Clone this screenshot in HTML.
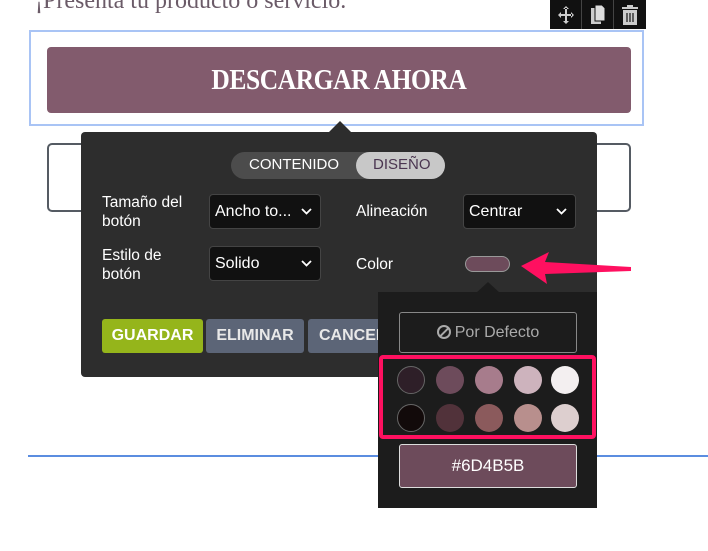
<!DOCTYPE html>
<html><head><meta charset="utf-8"><style>
*{box-sizing:border-box;margin:0;padding:0}
body{width:708px;height:551px;background:#fff;position:relative;overflow:hidden;font-family:"Liberation Sans",sans-serif}
.a{position:absolute}
.sel{background:#111;border:1px solid #444;border-radius:4px;color:#fff;font-size:16px;padding:0 0 0 5px;line-height:33px}
.sel svg{position:absolute;right:8px;top:13px}
.lbl{color:#fff;font-size:15.5px;line-height:19px}
.btn{color:#fff;font-weight:bold;font-size:16px;text-align:center;line-height:34px;border-radius:3px}
.c{position:absolute;width:28px;height:28px;border-radius:50%}
</style></head><body>
<div class="a" style="left:35px;top:-12px;font-family:'Liberation Serif',serif;font-size:24px;color:#6b5b68">¡Presenta tu producto o servicio.</div>
<div class="a" style="left:550px;top:0;width:96px;height:29px;background:#111;display:flex">
 <div style="width:32px;border-right:1px solid #444;display:flex;align-items:center;justify-content:center"><svg width="18" height="20" viewBox="0 0 18 20"><path d="M9 1L6 4h6zM9 19l-3-3h6zM1 10l3-3v6zM17 10l-3-3v6z M8 3h2v14H8z M3 9h12v2H3z" fill="#ccc"/></svg></div>
 <div style="width:32px;border-right:1px solid #444;display:flex;align-items:center;justify-content:center"><svg width="16" height="22" viewBox="0 0 16 22"><rect x="1" y="4" width="10" height="16" fill="#ccc"/><path d="M5 1h7l3 3v13H5z" fill="#ddd" stroke="#111" stroke-width="1"/></svg></div>
 <div style="width:32px;display:flex;align-items:center;justify-content:center"><svg width="18" height="22" viewBox="0 0 18 22"><rect x="1" y="3" width="16" height="2" fill="#ccc"/><rect x="6" y="1" width="6" height="2" fill="#ccc"/><path d="M2 6h14v15H2z" fill="#ccc"/><path d="M6 9v9M9 9v9M12 9v9" stroke="#111" stroke-width="1.2"/></svg></div>
</div>
<div class="a" style="left:29px;top:30px;width:615px;height:96px;border:2px solid #a9c4f5"></div>
<div class="a" style="left:47px;top:47px;width:584px;height:66px;background:#825b6d;border-radius:4px;color:#fff;font-family:'Liberation Serif',serif;font-weight:bold;font-size:29px;text-align:center;line-height:66px"><span style="display:inline-block;transform:scaleX(0.88);letter-spacing:-0.5px">DESCARGAR AHORA</span></div>
<div class="a" style="left:47px;top:143px;width:584px;height:69px;border:2px solid #555b63;border-radius:5px"></div>
<div class="a" style="left:28px;top:455px;width:680px;height:2px;background:#5b8de0"></div>
<div class="a" style="left:328px;top:121px;width:0;height:0;border-left:12px solid transparent;border-right:12px solid transparent;border-bottom:12px solid #2d2d2d"></div>
<div class="a" style="left:81px;top:132px;width:516px;height:245px;background:#2d2d2d;border-radius:4px"></div>
<div class="a" style="left:231px;top:152px;width:214px;height:27px;background:#4c4c4c;border-radius:14px"></div>
<div class="a" style="left:356px;top:152px;width:89px;height:27px;background:#c8c8c8;border-radius:14px"></div>
<div class="a" style="left:249px;top:156px;color:#fff;font-size:15px">CONTENIDO</div>
<div class="a" style="left:373px;top:156px;color:#4a3550;font-size:15px">DISEÑO</div>
<div class="a lbl" style="left:102px;top:193px">Tamaño del<br>botón</div>
<div class="a lbl" style="left:102px;top:246px">Estilo de<br>botón</div>
<div class="a lbl" style="left:356px;top:202px">Alineación</div>
<div class="a lbl" style="left:356px;top:255px">Color</div>
<div class="a sel" style="left:209px;top:194px;width:112px;height:35px">Ancho to...<svg width="11" height="7"><path d="M1 1l4.5 4.5L10 1" stroke="#fff" stroke-width="1.8" fill="none"/></svg></div>
<div class="a sel" style="left:209px;top:246px;width:112px;height:35px">Solido<svg width="11" height="7"><path d="M1 1l4.5 4.5L10 1" stroke="#fff" stroke-width="1.8" fill="none"/></svg></div>
<div class="a sel" style="left:463px;top:194px;width:113px;height:35px">Centrar<svg width="11" height="7"><path d="M1 1l4.5 4.5L10 1" stroke="#fff" stroke-width="1.8" fill="none"/></svg></div>
<div class="a" style="left:465px;top:256px;width:45px;height:16px;background:#6d4b5b;border:1px solid #999;border-radius:8px"></div>
<div class="a btn" style="left:102px;top:319px;width:101px;background:#95b51b">GUARDAR</div>
<div class="a btn" style="left:206px;top:319px;width:98px;background:#5c6577;color:#e8e8e8">ELIMINAR</div>
<div class="a btn" style="left:308px;top:319px;width:90px;background:#5c6577;color:#e8e8e8;text-align:left;padding-left:11px">CANCELAR</div>
<div class="a" style="left:476px;top:282px;width:0;height:0;border-left:12px solid transparent;border-right:12px solid transparent;border-bottom:11px solid #1c1c1c"></div>
<div class="a" style="left:378px;top:292px;width:219px;height:216px;background:#1c1c1c"></div>
<div class="a" style="left:399px;top:312px;width:178px;height:41px;border:1px solid #888;border-radius:3px;color:#aaa;font-size:16px;text-align:center;line-height:39px"><span style="display:inline-block;width:14px;height:14px;border:2px solid #aaa;border-radius:50%;position:relative;vertical-align:-2px;margin-right:4px"><span style="position:absolute;left:4px;top:-1px;width:2px;height:13px;background:#aaa;transform:rotate(45deg)"></span></span>Por Defecto</div>
<div class="a" style="left:379px;top:355px;width:217px;height:84px;border:4px solid #ff1060;border-radius:4px"></div>
<div class="c" style="left:397px;top:366px;background:#2e1f28;border:1px solid #666"></div>
<div class="c" style="left:436px;top:366px;background:#6d4b5b"></div>
<div class="c" style="left:475px;top:366px;background:#a77c8c"></div>
<div class="c" style="left:514px;top:366px;background:#cdb3bd"></div>
<div class="c" style="left:551px;top:366px;background:#f3eff0"></div>
<div class="c" style="left:397px;top:404px;background:#120a0a;border:1px solid #666"></div>
<div class="c" style="left:436px;top:404px;background:#51323a"></div>
<div class="c" style="left:475px;top:404px;background:#8b5a5c"></div>
<div class="c" style="left:514px;top:404px;background:#b88f8d"></div>
<div class="c" style="left:551px;top:404px;background:#ddcfcf"></div>
<div class="a" style="left:399px;top:444px;width:178px;height:44px;background:#6d4b5b;border:1px solid #ddd;border-radius:3px;color:#fff;font-size:17px;text-align:center;line-height:42px">#6D4B5B</div>
<svg class="a" style="left:515px;top:248px" width="120" height="40"><path d="M6 18L34 4L30 14L116 19L116 23L30 26L32 36Z" fill="#ff1060"/></svg>
</body></html>
